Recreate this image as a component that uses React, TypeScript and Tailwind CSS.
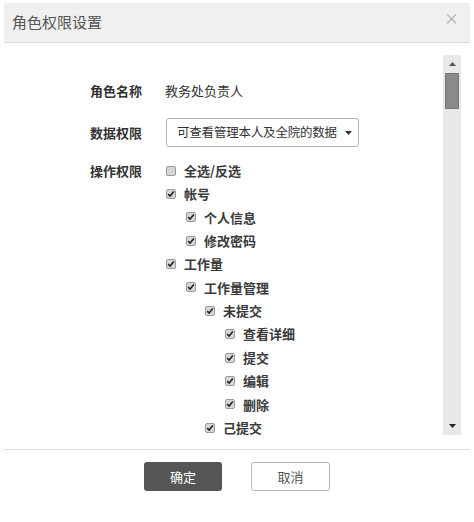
import React from "react";

type Node = { label: string; level: number; checked: boolean };

const items: Node[] = [
  { label: "全选/反选", level: 0, checked: false },
  { label: "帐号", level: 0, checked: true },
  { label: "个人信息", level: 1, checked: true },
  { label: "修改密码", level: 1, checked: true },
  { label: "工作量", level: 0, checked: true },
  { label: "工作量管理", level: 1, checked: true },
  { label: "未提交", level: 2, checked: true },
  { label: "查看详细", level: 3, checked: true },
  { label: "提交", level: 3, checked: true },
  { label: "编辑", level: 3, checked: true },
  { label: "删除", level: 3, checked: true },
  { label: "己提交", level: 2, checked: true },
];

const indent = ["pl-0", "pl-[20px]", "pl-[39px]", "pl-[59px]"];

function Box({ checked }: { checked: boolean }) {
  return (
    <span className="w-[10px] h-[10px] rounded-[2px] border border-[#9a9a9a] bg-[#d6d6d6] flex items-center justify-center shrink-0">
      {checked && (
        <svg width="8" height="8" viewBox="0 0 8 8">
          <path d="M1.2 4.2 L3.1 6 L6.8 1.6" stroke="#222" strokeWidth="1.6" fill="none" />
        </svg>
      )}
    </span>
  );
}

export default function App() {
  return (
    <div className="w-[474px] h-[522px] bg-white pt-[3px] px-[4px] font-['Noto_Sans_CJK_SC',sans-serif] text-[#333]">
      <div className="h-[40px] bg-[#f0f0f0] border-b border-[#dcdcdc] flex items-center justify-between pl-[8px] pr-[11px]">
        <span className="text-[15px] text-[#555]">角色权限设置</span>
        <span className="text-[15px] text-[#aaa] leading-none -mt-[10px]">×</span>
      </div>
      <div className="h-[406px] flex">
        <div className="flex-1 overflow-hidden pl-[86px] pt-[36px]">
          <div className="h-[24px] flex items-center text-[13px]">
            <span className="w-[75px] font-semibold">角色名称</span>
            <span>教务处负责人</span>
          </div>
          <div className="mt-[15px] flex items-center text-[13px]">
            <span className="w-[76px] font-semibold">数据权限</span>
            <div className="w-[193px] h-[29px] border border-[#b5b5b5] rounded-[3px] flex items-center justify-between pl-[10px] pr-[6px]">
              <span className="text-[12.5px] tracking-[-0.2px]">可查看管理本人及全院的数据</span>
              <svg width="7" height="4" viewBox="0 0 7 4">
                <path d="M0 0 L7 0 L3.5 4 Z" fill="#333" />
              </svg>
            </div>
          </div>
          <div className="mt-[12px] flex text-[13px]">
            <span className="w-[76px] h-[23.36px] flex items-center font-semibold">操作权限</span>
            <div className="flex flex-col">
              {items.map((it, i) => (
                <div key={i} className={`h-[23.36px] flex items-center gap-[8px] ${indent[it.level]}`}>
                  <Box checked={it.checked} />
                  <span className="font-semibold text-[#3a3a3a]">{it.label}</span>
                </div>
              ))}
            </div>
          </div>
        </div>
        <div className="pt-[12px] pr-[9px]">
          <div className="w-[18px] h-[380px] bg-[#e8e8e8] flex flex-col items-center">
            <div className="h-[18px] flex items-center justify-center">
              <svg width="7" height="4" viewBox="0 0 7 4">
                <path d="M0 4 L7 4 L3.5 0 Z" fill="#555" />
              </svg>
            </div>
            <div className="w-[14px] h-[36px] bg-[#8a8a8a] border border-[#777]" />
            <div className="flex-1" />
            <div className="h-[18px] flex items-center justify-center">
              <svg width="7" height="4" viewBox="0 0 7 4">
                <path d="M0 0 L7 0 L3.5 4 Z" fill="#222" />
              </svg>
            </div>
          </div>
        </div>
      </div>
      <div className="border-t border-[#dcdcdc] pt-[12px] flex justify-center gap-[29px] text-[13px]">
        <button className="w-[78px] h-[29px] rounded-[3px] bg-[#555] text-white">确定</button>
        <button className="w-[79px] h-[29px] rounded-[3px] border border-[#b8b8b8] bg-white text-[#555]">取消</button>
      </div>
    </div>
  );
}
